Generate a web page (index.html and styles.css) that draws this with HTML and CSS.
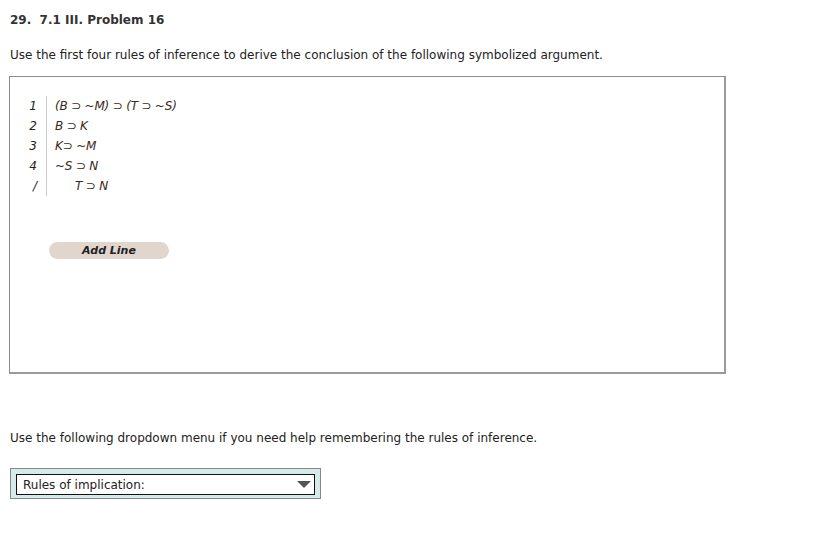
FILE: index.html
```html
<!DOCTYPE html>
<html>
<head>
<meta charset="utf-8">
<link rel="stylesheet" href="styles.css">
</head>
<body>
<div class="page">
  <h1 class="title">29. &nbsp;7.1 III. Problem 16</h1>
  <p class="intro">Use the first four rules of inference to derive the conclusion of the following symbolized argument.</p>
  <div class="proof-box">
    <div class="proof">
      <div class="row"><span class="num">1</span><span class="formula">(B ⊃ ~M) ⊃ (T ⊃ ~S)</span></div>
      <div class="row"><span class="num">2</span><span class="formula">B ⊃ K</span></div>
      <div class="row"><span class="num">3</span><span class="formula">K⊃ ~M</span></div>
      <div class="row"><span class="num">4</span><span class="formula">~S ⊃ N</span></div>
      <div class="row"><span class="num">/</span><span class="formula concl">T ⊃ N</span></div>
    </div>
    <div class="btn-row"><span class="add-btn">Add Line</span></div>
  </div>
  <p class="help">Use the following dropdown menu if you need help remembering the rules of inference.</p>
  <div class="select-wrap">
    <div class="select"><span>Rules of implication:</span><span class="arrow"></span></div>
  </div>
</div>
</body>
</html>
```

FILE: styles.css
```css
body {
  margin: 0;
  background: #fff;
  font-family: "DejaVu Sans", Verdana, sans-serif;
  color: #222;
}
.page {
  padding: 12px 0 0 9px;
}
.title {
  margin: 0 0 0 1px;
  font-size: 12px;
  font-weight: bold;
  line-height: 16px;
  color: #333;
}
.intro {
  margin: 19px 0 0 1px;
  font-size: 12px;
  line-height: 16px;
  color: #222;
}
.proof-box {
  margin-top: 13px;
  width: 714px;
  height: 295px;
  border: 1px solid #8c8c8c;
  border-right-width: 2px;
  border-bottom-width: 2px;
  border-right-color: #9a9a9a;
  border-bottom-color: #9a9a9a;
}
.proof {
  margin: 19px 0 0 0;
}
.row {
  display: flex;
  height: 20px;
  align-items: center;
  font-style: italic;
  font-size: 12px;
  color: #3a2a20;
}
.num {
  width: 27px;
  text-align: right;
  padding-right: 9px;
  margin-right: 8px;
  height: 20px;
  line-height: 20px;
  border-right: 1px solid #ccc;
  color: #222;
}
.formula {
  line-height: 20px;
  white-space: pre;
  letter-spacing: -0.2px;
}
.concl {
  padding-left: 20px;
}
.btn-row {
  margin: 46px 0 0 39px;
}
.add-btn {
  display: block;
  width: 120px;
  height: 17px;
  line-height: 17px;
  border-radius: 9px;
  background: #e0d6ce;
  text-align: center;
  font-size: 11px;
  font-weight: bold;
  font-style: italic;
  color: #222;
}
.help {
  margin: 56px 0 0 1px;
  font-size: 12px;
  line-height: 16px;
  color: #222;
}
.select-wrap {
  margin-top: 22px;
  width: 299px;
  padding: 5px 5px 3px 5px;
  margin-left: 1px;
  background: #d4ebea;
  border: 1px solid #888;
}
.select {
  display: flex;
  justify-content: space-between;
  align-items: center;
  height: 19px;
  border: 1px solid #111;
  background: #fff;
  padding: 0 3px 0 6px;
  font-size: 12px;
  color: #222;
}
.arrow {
  width: 0;
  height: 0;
  border-left: 7px solid transparent;
  border-right: 7px solid transparent;
  border-top: 7px solid #555;
}
```
